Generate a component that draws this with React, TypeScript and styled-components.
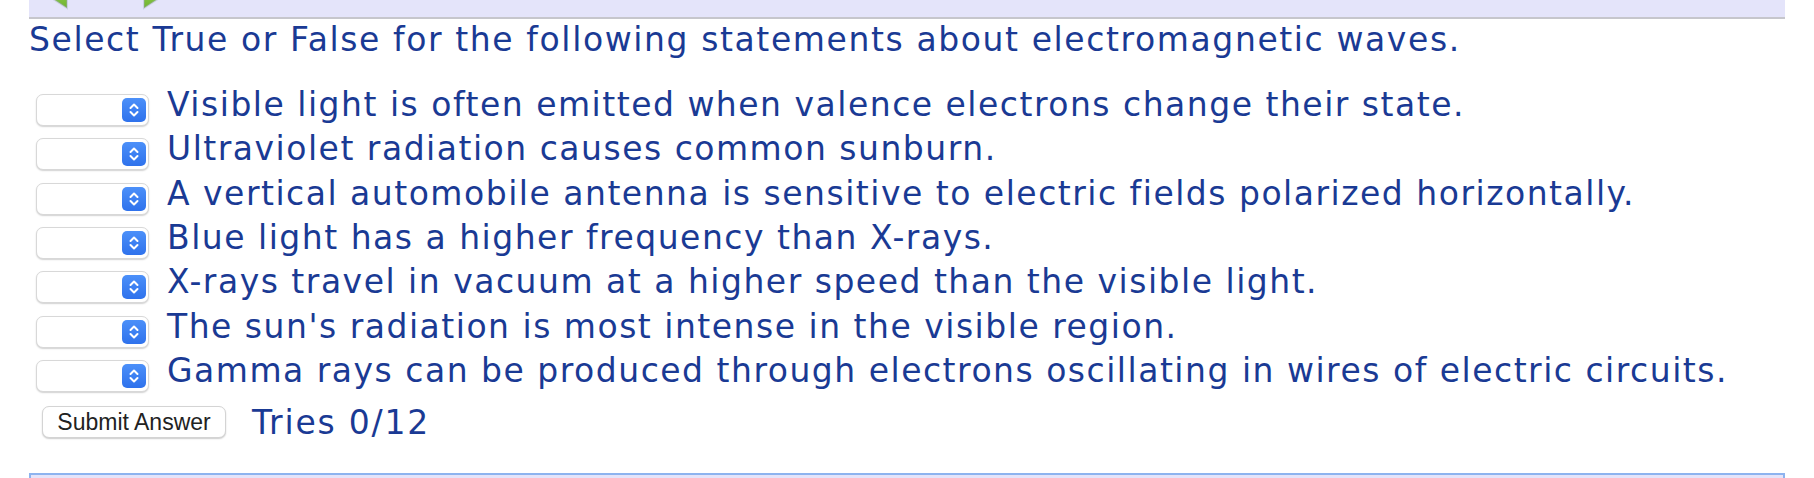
import React from "react";
import styled, { createGlobalStyle } from "styled-components";

const Global = createGlobalStyle`
  html, body { margin: 0; padding: 0; background: #ffffff; }
  body { font-family: "DejaVu Sans", Verdana, sans-serif; overflow: hidden; }
`;

const Page = styled.div`
  padding-left: 29px;
  width: 1785px;
  height: 478px;
  overflow: hidden;
  box-sizing: border-box;
`;

const TopBar = styled.div`
  position: relative;
  height: 17px;
  background: #e4e4fa;
  border-bottom: 2px solid #c6c6cc;
  overflow: hidden;
`;

const NavArrow = styled.svg<{ $left: number }>`
  position: absolute;
  top: -24px;
  left: ${(p) => p.$left}px;
  width: 34px;
  height: 34px;
`;

const Heading = styled.div`
  font-size: 33px;
  line-height: 38px;
  letter-spacing: 1.6px;
  color: #1a3a94;
  margin-top: 2px;
  white-space: nowrap;
`;

const List = styled.div`
  margin-top: 24px;
  padding-left: 7px;
  display: flex;
  flex-direction: column;
`;

const Row = styled.div`
  display: flex;
  align-items: flex-start;
  height: 44.33px;
`;

const SelectBox = styled.div`
  position: relative;
  flex: none;
  width: 113px;
  height: 32px;
  margin-top: 11px;
  box-sizing: border-box;
  background: #ffffff;
  border: 1px solid #d8d8d8;
  border-radius: 7px;
  box-shadow: 0 1px 1.5px rgba(0, 0, 0, 0.18);
`;

const Stepper = styled.div`
  position: absolute;
  right: 2px;
  top: 3px;
  width: 24px;
  height: 24px;
  border-radius: 5px;
  background: linear-gradient(#4c90f9, #2f72ec);
  display: flex;
  align-items: center;
  justify-content: center;
`;

const Statement = styled.span`
  font-size: 33px;
  line-height: 44px;
  letter-spacing: 1.5px;
  color: #1a3a94;
  margin-left: 18px;
  white-space: nowrap;
`;

const SubmitRow = styled.div`
  display: flex;
  align-items: flex-start;
  height: 44px;
  margin-top: 8px;
  padding-left: 13px;
`;

const SubmitButton = styled.button`
  margin-top: 5px;
  width: 184px;
  height: 32px;
  padding: 0;
  background: #ffffff;
  border: 1px solid #d4d4d4;
  border-radius: 7px;
  box-shadow: 0 1px 1.5px rgba(0, 0, 0, 0.2);
  font-family: "Liberation Sans", Arial, sans-serif;
  font-size: 23px;
  color: #222222;
`;

const Tries = styled.span`
  margin-left: 26px;
  font-size: 33px;
  line-height: 44px;
  letter-spacing: 1.8px;
  color: #1a3a94;
  white-space: nowrap;
`;

const BottomBox = styled.div`
  margin-top: 28px;
  height: 20px;
  background: #e4e4fa;
  border: 2px solid #8db3ef;
`;

const statements = [
  "Visible light is often emitted when valence electrons change their state.",
  "Ultraviolet radiation causes common sunburn.",
  "A vertical automobile antenna is sensitive to electric fields polarized horizontally.",
  "Blue light has a higher frequency than X-rays.",
  "X-rays travel in vacuum at a higher speed than the visible light.",
  "The sun's radiation is most intense in the visible region.",
  "Gamma rays can be produced through electrons oscillating in wires of electric circuits.",
];

function Chevrons() {
  return (
    <svg width="14" height="18" viewBox="0 0 14 18" fill="none">
      <path d="M3.5 7 L7 3.5 L10.5 7" stroke="#fff" strokeWidth="2" strokeLinecap="round" strokeLinejoin="round" />
      <path d="M3.5 11 L7 14.5 L10.5 11" stroke="#fff" strokeWidth="2" strokeLinecap="round" strokeLinejoin="round" />
    </svg>
  );
}

function Arrow({ left, dir }: { left: number; dir: "l" | "r" }) {
  const d = dir === "l" ? "M28 2 L28 32 L5 17 Z" : "M6 2 L6 32 L29 17 Z";
  return (
    <NavArrow $left={left} viewBox="0 0 34 34">
      <defs>
        <linearGradient id={`g${dir}`} x1="0" y1="0" x2="0" y2="1">
          <stop offset="0" stopColor="#a6dc6a" />
          <stop offset="1" stopColor="#6fb42c" />
        </linearGradient>
      </defs>
      <path d={d} fill={`url(#g${dir})`} stroke="#9aa5b5" strokeOpacity="0.35" strokeWidth="2" />
    </NavArrow>
  );
}

export default function App() {
  return (
    <>
      <Global />
      <Page>
        <TopBar>
          <Arrow left={10} dir="l" />
          <Arrow left={109} dir="r" />
        </TopBar>
        <Heading>Select True or False for the following statements about electromagnetic waves.</Heading>
        <List>
          {statements.map((s) => (
            <Row key={s}>
              <SelectBox>
                <Stepper>
                  <Chevrons />
                </Stepper>
              </SelectBox>
              <Statement>{s}</Statement>
            </Row>
          ))}
        </List>
        <SubmitRow>
          <SubmitButton>Submit Answer</SubmitButton>
          <Tries>Tries 0/12</Tries>
        </SubmitRow>
        <BottomBox />
      </Page>
    </>
  );
}
